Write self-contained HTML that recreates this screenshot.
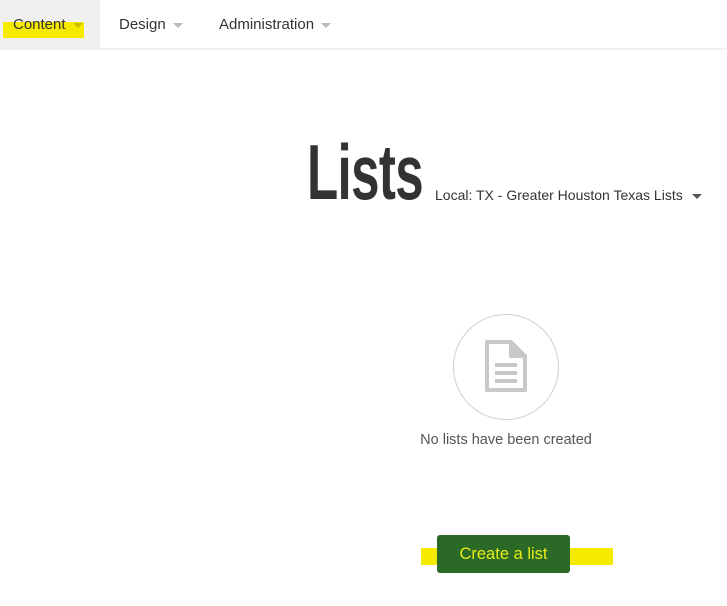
<!DOCTYPE html>
<html><head><style>
body{margin:0;width:727px;height:606px;background:#fff;font-family:"Liberation Sans",sans-serif;position:relative;overflow:hidden;color:#333}
.nav{position:absolute;left:0;top:0;width:727px;height:48px;background:#fff;box-shadow:0 1px 3px rgba(0,0,0,.12)}
.tab0{position:absolute;left:0;top:0;width:100px;height:48px;background:#f0f0f0}
.hl{position:absolute;background:#f5ea00}
.t{position:absolute;font-size:15px;color:#333;top:16px}
.caret{display:inline-block;width:0;height:0;border-left:5px solid transparent;border-right:5px solid transparent;border-top:5px solid #bbb;vertical-align:middle;margin-left:7px}
</style></head><body>
<div class="nav">
<div class="tab0"></div>
<div class="hl" style="left:3px;top:22px;width:81px;height:16px"></div>
<div class="t" style="left:13px">Content<span class="caret" style="border-top-color:#c8c000"></span></div>
<div class="t" style="left:119px">Design<span class="caret"></span></div>
<div class="t" style="left:219px">Administration<span class="caret"></span></div>
</div>
<div style="position:absolute;left:307px;top:127px;font-weight:bold;font-size:78px;color:#333;transform:scaleX(0.655);transform-origin:left top;letter-spacing:-1px">Lists</div>
<div style="position:absolute;left:435px;top:187px;font-size:14px;color:#333">Local: TX - Greater Houston Texas Lists<span class="caret" style="border-top-color:#555;margin-left:9px"></span></div>
<div style="position:absolute;left:453px;top:314px;width:104px;height:104px;border:1px solid #d0d0d0;border-radius:50%"></div>
<svg style="position:absolute;left:483px;top:340px" width="46" height="54" viewBox="0 0 46 54">
<path d="M4 2 H28 L42 16 V50 H4 Z" fill="none" stroke="#c8c8c8" stroke-width="4" stroke-linejoin="round"/>
<path d="M28 2 V16 H42" fill="#c8c8c8" stroke="#c8c8c8" stroke-width="4" stroke-linejoin="round"/>
<path d="M12 25 H34 M12 33 H34 M12 41 H34" stroke="#c8c8c8" stroke-width="4"/>
</svg>
<div style="position:absolute;left:400px;width:212px;text-align:center;top:432px;font-size:14.5px;color:#555">No lists have been created</div>
<div class="hl" style="left:421px;top:548px;width:192px;height:17px"></div>
<div style="position:absolute;left:437px;top:535px;width:133px;height:38px;background:#2b6a26;border-radius:3px;color:#e8ec1a;font-size:16.5px;text-align:center;line-height:38px">Create a list</div>
</body></html>
